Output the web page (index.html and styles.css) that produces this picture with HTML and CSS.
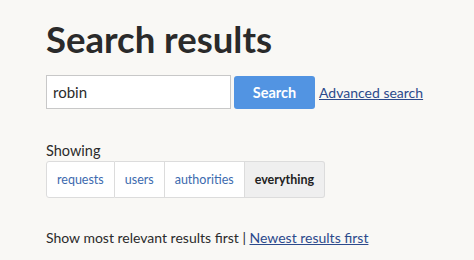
FILE: index.html
```html
<!DOCTYPE html>
<html lang="en">
<head>
    <meta charset="UTF-8">
    <meta name="viewport" content="width=device-width, initial-scale=1.0">
    <title>Search results</title>
    <link rel="stylesheet" href="styles.css">
</head>
<body>
    <div class="container">
        <h1 class="title">Search results</h1>

        <!-- Search form -->
        <form class="search-form" onsubmit="return false">
            <input class="search-input" type="text" value="robin">
            <button class="search-button" type="submit">Search</button>
            <a class="advanced-link" href="#">Advanced search</a>
        </form>

        <!-- Result type filter -->
        <div class="showing">
            <div class="showing-label">Showing</div>
            <ul class="tabs">
                <li class="tab"><a href="#">requests</a></li>
                <li class="tab"><a href="#">users</a></li>
                <li class="tab"><a href="#">authorities</a></li>
                <li class="tab active">everything</li>
            </ul>
        </div>

        <div class="sort">
            Show most relevant results first | <a href="#">Newest results first</a>
        </div>
    </div>
</body>
</html>
```

FILE: styles.css
```css
body {
    margin: 0;
    background-color: #f9f8f5;
    font-family: Lato, "Open Sans", sans-serif;
    color: #2b2b2b;
}
.container {
    padding: 14px 46px 0 46px;
}
.title {
    font-size: 36.5px;
    font-weight: 700;
    line-height: 50px;
    margin: 0 0 11px 0;
    color: #2a2a2a;
}
.search-form {
    display: flex;
    align-items: center;
}
.search-input {
    width: 185px;
    height: 34px;
    box-sizing: border-box;
    border: 1px solid #c8c8c8;
    background-color: #fff;
    padding: 0 6px;
    font-family: inherit;
    font-size: 15px;
    color: #2b2b2b;
    margin: 0;
}
.search-button {
    margin-left: 3px;
    width: 81px;
    height: 33px;
    border: none;
    border-radius: 3px;
    background-color: #5294e2;
    color: #fff;
    font-family: inherit;
    font-size: 14.5px;
    font-weight: 700;
    cursor: pointer;
}
.advanced-link {
    margin-left: 4px;
    font-size: 14px;
    white-space: nowrap;
    color: #2c4a8c;
}
.showing {
    margin-top: 33px;
}
.showing-label {
    font-size: 14.5px;
    line-height: 18px;
}
.tabs {
    display: flex;
    list-style: none;
    margin: 1px 0 0 0;
    padding: 0;
}
.tab {
    height: 37px;
    box-sizing: border-box;
    display: flex;
    align-items: center;
    padding: 0 10px;
    border: 1px solid #dcdcdc;
    border-left: none;
    background-color: #fff;
    font-size: 12.5px;
}
.tab:first-child {
    border-left: 1px solid #dcdcdc;
    border-radius: 3px 0 0 3px;
}
.tab:last-child {
    border-radius: 0 3px 3px 0;
}
.tab a {
    color: #3c6aae;
    text-decoration: none;
}
.tab.active {
    background-color: #efefef;
    font-weight: 700;
    color: #222;
}
.sort {
    margin-top: 31px;
    font-size: 14px;
}
.sort a {
    color: #2c4a8c;
}
```
